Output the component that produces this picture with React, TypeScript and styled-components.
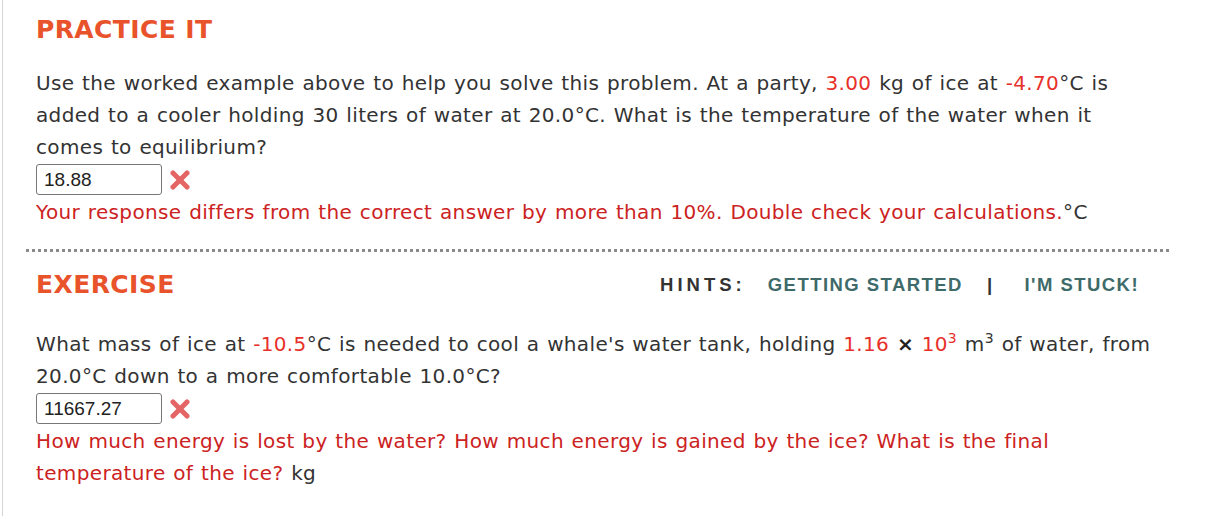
import React from 'react'
import styled, { createGlobalStyle } from 'styled-components'

const GlobalStyle = createGlobalStyle`
  html, body {
    margin: 0;
    padding: 0;
    background: #ffffff;
  }
`

const Page = styled.div`
  margin-left: 2px;
  border-left: 1px solid #d4d4d4;
  min-height: 516px;
  box-sizing: border-box;
  padding: 14px 46px 0 23px;
  font-family: 'DejaVu Sans', Verdana, sans-serif;
  color: #333333;
`

const Section = styled.section`
  padding: 0 18px 0 10px;
`

const Heading = styled.h2`
  margin: 0;
  font-family: 'DejaVu Sans', Verdana, sans-serif;
  font-size: 25px;
  letter-spacing: 0.4px;
  font-weight: bold;
  line-height: 32px;
  color: #e9532b;
`

const HeaderRow = styled.div`
  display: flex;
  align-items: center;
  justify-content: space-between;
`

const Hints = styled.div`
  display: flex;
  align-items: center;
  font-family: 'Liberation Sans', Arial, sans-serif;
  font-weight: bold;
  font-size: 18.5px;
  letter-spacing: 1.45px;
  margin-right: 13px;
`

const HintsLabel = styled.span`
  color: #333333;
  letter-spacing: 4px;
  margin-right: 22px;
`

const HintLink = styled.a`
  color: #3e6a6a;
  text-decoration: none;
`

const Pipe = styled.span`
  color: #333333;
  margin: 0 31px 0 24px;
`

const Question = styled.p<{ $top: number }>`
  margin: ${({ $top }) => $top}px 0 0;
  font-size: 20px;
  letter-spacing: 0.35px;
  word-spacing: 1px;
  line-height: 32px;
`

const Value = styled.span`
  color: #e8302a;
`

const Times = styled.span`
  color: #222222;
  font-weight: bold;
`

const Sup = styled.sup`
  font-size: 14px;
  line-height: 0;
  vertical-align: 8px;
`

const AnswerRow = styled.div`
  display: flex;
  align-items: center;
  gap: 7px;
  margin-top: 1px;
`

const AnswerBox = styled.div`
  width: 126px;
  height: 31px;
  box-sizing: border-box;
  border: 1px solid #777777;
  border-radius: 3px;
  padding: 0 7px;
  display: flex;
  align-items: center;
  font-family: 'Liberation Sans', Arial, sans-serif;
  font-size: 19px;
  color: #222222;
`

const Feedback = styled.p`
  margin: 1px 0 0;
  font-size: 20px;
  letter-spacing: 0.35px;
  word-spacing: 1px;
  line-height: 32px;
  color: #cc2222;
`

const Unit = styled.span`
  color: #333333;
`

const Divider = styled.div`
  height: 3px;
  margin: 21px 0 17px;
  background-image: repeating-linear-gradient(
    to right,
    #8a8a8a 0,
    #8a8a8a 3px,
    transparent 3px,
    transparent 6px
  );
`

const WrongMark = () => (
  <svg width="22" height="22" viewBox="0 0 22 22">
    <g stroke="#e25858" strokeWidth="5" strokeLinecap="round" opacity="0.92">
      <line x1="4" y1="4" x2="18" y2="18" />
      <line x1="18" y1="4" x2="4" y2="18" />
    </g>
  </svg>
)

export default function App() {
  return (
    <>
      <GlobalStyle />
      <Page>
        <Section>
          <Heading>PRACTICE IT</Heading>
          <Question $top={21}>
            Use the worked example above to help you solve this problem. At a party, <Value>3.00</Value> kg of ice at{' '}
            <Value>-4.70</Value>°C is added to a cooler holding 30 liters of water at 20.0°C. What is the temperature of
            the water when it comes to equilibrium?
          </Question>
          <AnswerRow>
            <AnswerBox>18.88</AnswerBox>
            <WrongMark />
          </AnswerRow>
          <Feedback>
            Your response differs from the correct answer by more than 10%. Double check your calculations.
            <Unit>°C</Unit>
          </Feedback>
        </Section>
        <Divider />
        <Section>
          <HeaderRow>
            <Heading>EXERCISE</Heading>
            <Hints>
              <HintsLabel>HINTS:</HintsLabel>
              <HintLink href="#">GETTING STARTED</HintLink>
              <Pipe>|</Pipe>
              <HintLink href="#">I'M STUCK!</HintLink>
            </Hints>
          </HeaderRow>
          <Question $top={27}>
            What mass of ice at <Value>-10.5</Value>°C is needed to cool a whale's water tank, holding <Value>1.16</Value>{' '}
            <Times>×</Times> <Value>10<Sup>3</Sup></Value> m<Sup>3</Sup> of water, from 20.0°C down to a more
            comfortable 10.0°C?
          </Question>
          <AnswerRow>
            <AnswerBox>11667.27</AnswerBox>
            <WrongMark />
          </AnswerRow>
          <Feedback>
            How much energy is lost by the water? How much energy is gained by the ice? What is the final temperature of
            the ice? <Unit>kg</Unit>
          </Feedback>
        </Section>
      </Page>
    </>
  )
}
